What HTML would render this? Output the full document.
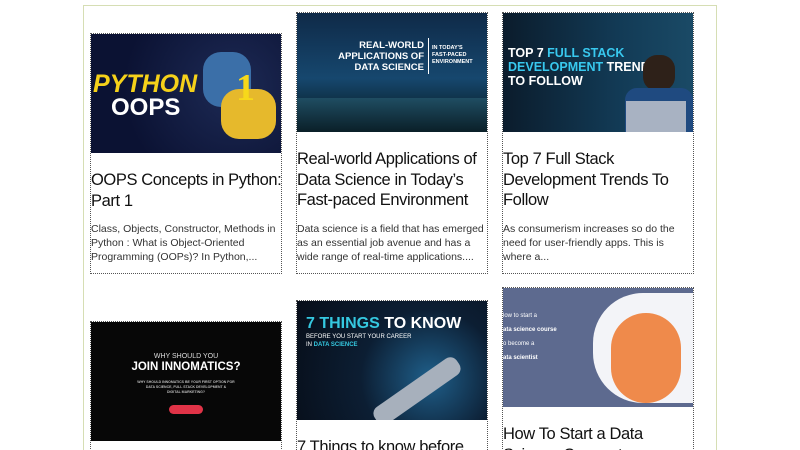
<!DOCTYPE html>
<html><head><meta charset="utf-8"><style>
*{margin:0;padding:0;box-sizing:border-box}
html,body{width:800px;height:450px;overflow:hidden}
body{background:#fff;font-family:"Liberation Sans","DejaVu Sans",sans-serif;position:relative}
.wrap{position:absolute;left:83px;top:5px;width:634px;height:445px;border:1px solid #d6deb4;border-bottom:none}
.card{position:absolute;width:192px;border:1px dotted #555}
.img{position:absolute;left:0;top:0;width:190px;height:119px;overflow:hidden}
.t{position:absolute;left:0;width:192px;font-size:16.5px;line-height:20.5px;color:#111;letter-spacing:-0.4px;white-space:nowrap}
.d{position:absolute;left:0;width:192px;font-size:10.5px;line-height:14px;color:#333;white-space:nowrap}
</style></head><body>
<div class="wrap"></div>

<div class="card" style="left:90px;top:33px;height:241px">
<div class="img" style="background:radial-gradient(circle at 75% 45%,#1d2a55,#0b1233 70%)">
 <div style="position:absolute;left:2px;top:36px;font:italic 900 25px 'Liberation Sans';color:#f5d11a">PYTHON</div>
 <div style="position:absolute;left:20px;top:60px;font:900 24px 'Liberation Sans';color:#fff">OOPS</div>
 <div style="position:absolute;left:112px;top:18px;width:48px;height:55px;border-radius:18px;background:#3b6fa8"></div>
 <div style="position:absolute;left:130px;top:55px;width:55px;height:50px;border-radius:18px;background:#e6b92c"></div>
 <div style="position:absolute;left:145px;top:32px;font:bold 38px 'Liberation Serif';color:#f7d81a">1</div>
</div>
<div class="t" style="top:136px">OOPS Concepts in Python:<br>Part 1</div>
<div class="d" style="top:188px">Class, Objects, Constructor, Methods in<br>Python : What is Object-Oriented<br>Programming (OOPs)? In Python,...</div>
</div>

<div class="card" style="left:296px;top:12px;height:262px">
<div class="img" style="background:linear-gradient(#0f2a48,#16476e 55%,#0c2a3a 80%,#081a20)">
 <div style="position:absolute;left:22px;top:27px;width:105px;text-align:right;font:bold 9.5px/11px 'Liberation Sans';color:#fff">REAL-WORLD APPLICATIONS OF DATA SCIENCE</div>
 <div style="position:absolute;left:131px;top:25px;width:1px;height:36px;background:#fff"></div>
 <div style="position:absolute;left:135px;top:32px;font:bold 5.5px/7px 'Liberation Sans';color:#fff">IN TODAY'S<br>FAST-PACED<br>ENVIRONMENT</div>
 <div style="position:absolute;left:0;top:85px;width:190px;height:34px;background:linear-gradient(#1f4d62,#0a1f28)"></div>
</div>
<div class="t" style="top:136px">Real-world Applications of<br>Data Science in Today’s<br>Fast-paced Environment</div>
<div class="d" style="top:209px">Data science is a field that has emerged<br>as an essential job avenue and has a<br>wide range of real-time applications....</div>
</div>

<div class="card" style="left:502px;top:12px;height:262px">
<div class="img" style="background:linear-gradient(90deg,#0b1c2c,#123a55 60%,#1a4a66)">
 <div style="position:absolute;left:5px;top:33px;font:bold 12.5px/14px 'Liberation Sans';color:#fff">TOP 7 <span style="color:#38c8ee">FULL STACK<br>DEVELOPMENT</span> TRENDS<br>TO FOLLOW</div>
 <div style="position:absolute;left:140px;top:42px;width:32px;height:36px;border-radius:14px;background:#2e2119"></div>
 <div style="position:absolute;left:122px;top:75px;width:68px;height:44px;border-radius:12px 12px 0 0;background:#1f4a80"></div>
 <div style="position:absolute;left:123px;top:88px;width:60px;height:31px;background:#a8b2c2"></div>
</div>
<div class="t" style="top:136px">Top 7 Full Stack<br>Development Trends To<br>Follow</div>
<div class="d" style="top:209px">As consumerism increases so do the<br>need for user-friendly apps. This is<br>where a...</div>
</div>

<div class="card" style="left:90px;top:321px;height:140px">
<div class="img" style="background:#070707">
 <div style="position:absolute;left:0;width:190px;top:31px;text-align:center;font:7px 'Liberation Sans';color:#ddd">WHY SHOULD YOU</div>
 <div style="position:absolute;left:0;width:190px;top:39px;text-align:center;font:bold 11.5px 'Liberation Sans';color:#fff">JOIN INNOMATICS?</div>
 <div style="position:absolute;left:0;width:190px;top:58px;text-align:center;font:bold 3.5px/5px 'Liberation Sans';color:#bbb">WHY SHOULD INNOMATICS BE YOUR FIRST OPTION FOR<br>DATA SCIENCE, FULL STACK DEVELOPMENT &amp;<br>DIGITAL MARKETING?</div>
 <div style="position:absolute;left:78px;top:83px;width:34px;height:9px;border-radius:5px;background:#e03347"></div>
</div>
</div>

<div class="card" style="left:296px;top:300px;height:160px">
<div class="img" style="background:radial-gradient(circle at 70% 65%,#1f5f8a,#0c1e33 45%,#070d18)">
 <div style="position:absolute;left:9px;top:14px;font:bold 16px 'Liberation Sans';color:#35c8e0">7 THINGS <span style="color:#fff">TO KNOW</span></div>
 <div style="position:absolute;left:9px;top:33px;font:6px/7.5px 'Liberation Sans';color:#fff">BEFORE YOU START YOUR CAREER<br>IN <b style="color:#35c8e0">DATA SCIENCE</b></div>
 <div style="position:absolute;left:70px;top:80px;width:100px;height:20px;background:#a7b0bc;transform:rotate(-35deg);border-radius:8px"></div>
</div>
<div class="t" style="top:136px">7 Things to know before</div>
</div>

<div class="card" style="left:502px;top:287px;height:180px">
<div class="img" style="background:#5d6a8f">
 <div style="position:absolute;left:90px;top:5px;width:105px;height:110px;border-radius:50px 0 0 50px;background:#f3f4f8"></div>
 <div style="position:absolute;left:108px;top:25px;width:70px;height:90px;border-radius:35px;background:#ef8a4b"></div>
 <div style="position:absolute;left:0;top:21px;font:6px/14px 'Liberation Sans';color:#fff">low to start a<br><b>ata science course</b><br>o become a<br><b>ata scientist</b></div>
</div>
<div class="t" style="top:136px">How To Start a Data<br>Science Course to</div>
</div>
</body></html>
